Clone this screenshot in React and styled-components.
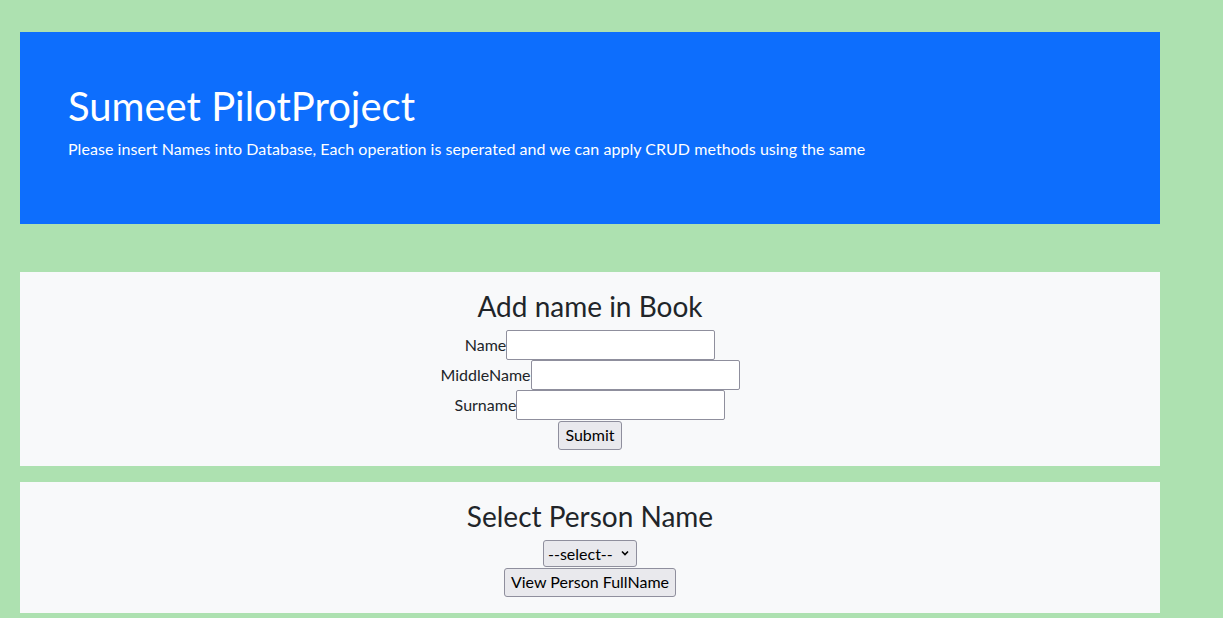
import React from 'react';
import styled, { createGlobalStyle } from 'styled-components';

const GlobalStyle = createGlobalStyle`
  body {
    margin: 0;
    background: #ade1b0;
    font-family: "Segoe UI", Lato, "Noto Sans", sans-serif;
    font-size: 16px;
    line-height: 1.5;
    color: #212529;
  }
`;

const App = () => {
  return (
    <>
      <GlobalStyle />
      <Page>
        <Jumbotron>
          <Title>Sumeet PilotProject</Title>
          <Lead>Please insert Names into Database, Each operation is seperated and we can apply CRUD methods using the same</Lead>
        </Jumbotron>

        <Panel>
          <PanelTitle>Add name in Book</PanelTitle>
          <FieldRow>
            <label htmlFor="name">Name</label>
            <TextInput id="name" type="text" />
          </FieldRow>
          <FieldRow>
            <label htmlFor="middle">MiddleName</label>
            <TextInput id="middle" type="text" />
          </FieldRow>
          <FieldRow>
            <label htmlFor="surname">Surname</label>
            <TextInput id="surname" type="text" />
          </FieldRow>
          <FieldRow>
            <Button type="submit">Submit</Button>
          </FieldRow>
        </Panel>

        <Panel>
          <PanelTitle>Select Person Name</PanelTitle>
          <FieldRow $height={27}>
            <SelectWrap>
              <Select defaultValue="">
                <option value="">--select--</option>
              </Select>
              <Chevron viewBox="0 0 10 10">
                <path d="M2 3.5 L5 6.5 L8 3.5" />
              </Chevron>
            </SelectWrap>
          </FieldRow>
          <FieldRow>
            <Button type="button">View Person FullName</Button>
          </FieldRow>
        </Panel>
      </Page>
    </>
  );
};

const Page = styled.div`
  width: 1140px;
  padding: 32px 0 0 20px;
`;

const Jumbotron = styled.div`
  background: #0d6efd;
  color: #fff;
  padding: 48px;
  margin-bottom: 48px;
`;

const Title = styled.h1`
  margin: 0 0 8px;
  padding-top: 2px;
  height: 46px;
  font-size: 40px;
  font-weight: 400;
  line-height: 1.2;
`;

const Lead = styled.p`
  margin: 0 0 16px;
  padding-top: 1px;
  height: 23px;
  font-size: 16px;
  letter-spacing: 0.05px;
`;

const Panel = styled.div`
  background: #f8f9fa;
  padding: 16px;
  margin-bottom: 16px;
  text-align: center;
`;

const PanelTitle = styled.h3`
  margin: 0 0 8px;
  padding-top: 2px;
  height: 32px;
  font-size: 28px;
  font-weight: 400;
  line-height: 1.2;
`;

const FieldRow = styled.div`
  display: flex;
  justify-content: center;
  align-items: center;
  height: ${({ $height }) => $height || 30}px;
  font-size: 16px;
`;

const TextInput = styled.input`
  box-sizing: border-box;
  width: 209px;
  height: 30px;
  border: 1px solid #8f8f9d;
  border-radius: 2px;
  background: #fff;
  padding: 1px 2px;
  font: inherit;
`;

const Button = styled.button`
  box-sizing: border-box;
  height: 29px;
  padding: 0 6px;
  border: 1px solid #8f8f9d;
  border-radius: 3px;
  background: #e9e9ed;
  color: #000;
  font: inherit;
  font-size: 16px;
  line-height: 1;
`;

const SelectWrap = styled.div`
  position: relative;
  display: inline-block;
  height: 27px;
`;

const Select = styled.select`
  box-sizing: border-box;
  appearance: none;
  width: 94px;
  height: 27px;
  padding: 0 20px 0 4px;
  border: 1px solid #8f8f9d;
  border-radius: 3px;
  background: #e9e9ed;
  color: #000;
  font: inherit;
  font-size: 16px;
`;

const Chevron = styled.svg`
  position: absolute;
  right: 7px;
  top: 8px;
  width: 10px;
  height: 10px;
  fill: none;
  stroke: #000;
  stroke-width: 1.6;
  pointer-events: none;
`;

export default App;
